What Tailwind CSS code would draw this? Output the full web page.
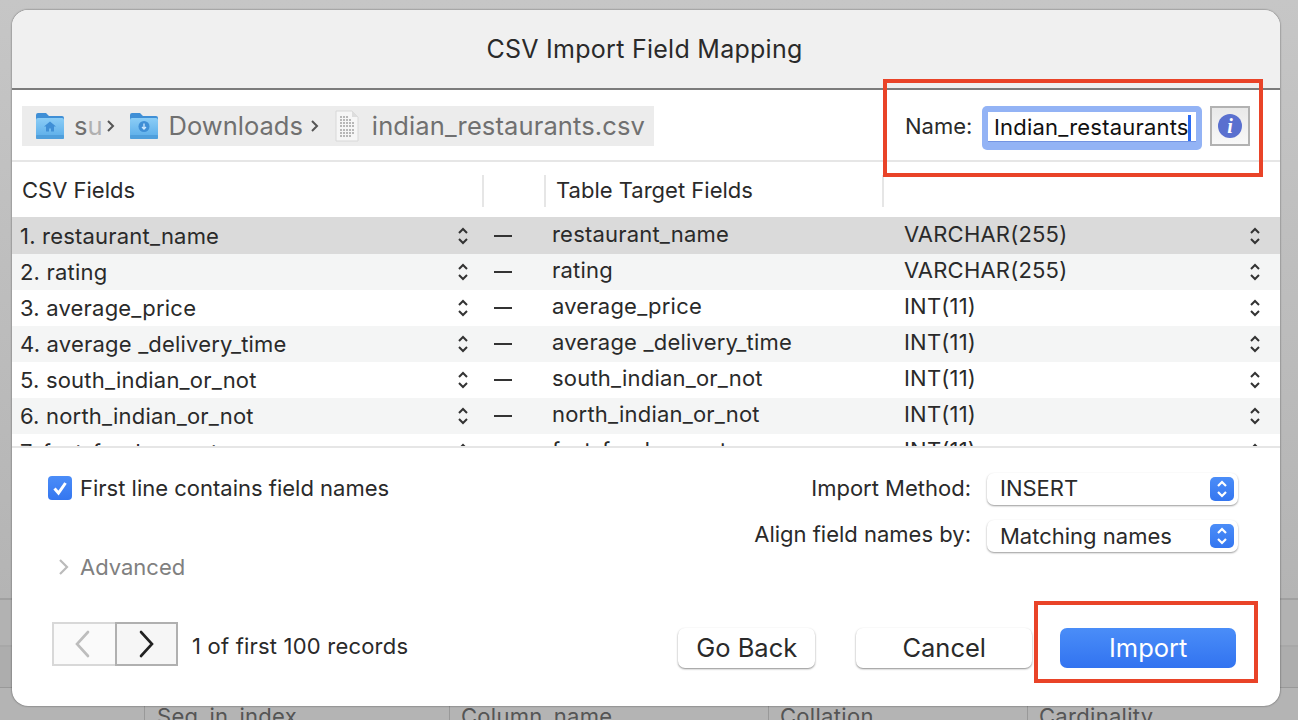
<!DOCTYPE html>
<html lang="en">
<head>
    <meta charset="UTF-8">
    <title>CSV Import Field Mapping</title>
    <script src="https://cdn.jsdelivr.net/npm/@tailwindcss/browser@4"></script>
</head>
<body class="relative w-[1298px] h-[720px] overflow-hidden font-['Inter','Noto_Sans',sans-serif] text-[#2a2a2a] text-[22px]">

<!-- table behind the dialog -->
<div class="h-[598px] bg-linear-to-b from-[#c6c6c6] to-[#b4b4b4]"></div>
<div class="h-[47px] bg-[#b2b2b2] border-t-2 border-[#a0a0a0]"></div>
<div class="h-[42px] bg-[#adadad] border-t-2 border-[#a8a8a8]"></div>
<div class="h-[33px] bg-[#b4b4b4] border-t border-[#999] flex pt-[17px] overflow-hidden text-[22px] text-[#555] leading-[22px] tracking-[0.3px]">
    <div class="w-[145px] border-r border-[#999]"></div>
    <div class="w-[305px] border-r border-[#999] pl-[12px]">Seq_in_index</div>
    <div class="w-[319px] border-r border-[#999] pl-[11px]">Column_name</div>
    <div class="w-[259px] border-r border-[#999] pl-[11px]">Collation</div>
    <div class="pl-[11px]">Cardinality</div>
</div>

<!-- dialog -->
<div class="absolute left-[12px] top-[10px] w-[1268px] h-[696px] rounded-[16px] bg-white overflow-hidden shadow-[0_0_2px_rgba(0,0,0,0.6)]">

    <div class="h-[78px] bg-[#f0f0f0] flex items-center justify-center pt-[2px] pr-[3px] text-[25px] tracking-[0.27px]">CSV Import Field Mapping</div>

    <!-- path + name -->
    <div class="h-[74px] border-t-2 border-b-2 border-t-[#7c7c7c] border-b-[#e6e6e6] flex items-center pt-[2px] pl-[10px]">
        <div class="w-[632px] shrink-0 h-[40px] bg-[#ececec] flex items-center pl-[13px] text-[#707070] text-[25.5px] whitespace-nowrap">
            <svg class="w-[30px] h-[28px]" viewBox="0 0 30 28">
                <defs><linearGradient id="body" x1="0" y1="0" x2="0" y2="1"><stop offset="0" stop-color="#8bcdf6"/><stop offset="1" stop-color="#58abe8"/></linearGradient></defs>
                <path d="M1 3a2 2 0 0 1 2-2h8l3 3h13a2 2 0 0 1 2 2v3H1z" fill="#3f8fd6"/>
                <rect x="1" y="6" width="28" height="21" rx="2" fill="url(#body)"/>
                <rect x="1" y="23" width="28" height="4" rx="1" fill="#4f9fdc"/>
                <path d="M15 9.500l6 5h-2v5h-3v-3h-2v3h-3v-5H9z" fill="#3f8fd6"/>
            </svg>
            <span class="ml-[9px]">s<span class="text-[#b0b0b0]">u</span></span>
            <svg class="ml-[3px] w-[10px] h-[14px]" viewBox="0 0 10 14" fill="none" stroke="#555" stroke-width="2"><path d="M2 2l5 5-5 5"/></svg>
            <svg class="ml-[13px] w-[30px] h-[28px]" viewBox="0 0 30 28">
                <path d="M1 3a2 2 0 0 1 2-2h8l3 3h13a2 2 0 0 1 2 2v3H1z" fill="#3f8fd6"/>
                <rect x="1" y="6" width="28" height="21" rx="2" fill="url(#body)"/>
                <rect x="1" y="23" width="28" height="4" rx="1" fill="#4f9fdc"/>
                <circle cx="15" cy="14.500" r="5.500" fill="#3f8fd6"/>
                <path d="M15 11.500v5M13 15l2 2 2-2" fill="none" stroke="#cfeaff" stroke-width="1.300"/>
            </svg>
            <span class="ml-[10px]">Downloads</span>
            <svg class="ml-[7px] w-[10px] h-[14px]" viewBox="0 0 10 14" fill="none" stroke="#555" stroke-width="2"><path d="M2 2l5 5-5 5"/></svg>
            <svg class="ml-[14px] w-[26px] h-[32px]" viewBox="0 0 26 32">
                <path d="M2 1h16l6 6v24H2z" fill="#f6f6f6" stroke="#d8d8d8"/>
                <path d="M18 1v6h6z" fill="#ddd"/>
                <path d="M6 7h9M6 10h11M6 13h14M6 16h14M6 20h14M6 23h14M6 26h12" stroke="#a2a2a2" stroke-width="1.400" stroke-dasharray="2 1"/>
            </svg>
            <span class="ml-[12px] tracking-[0.12px]">indian_restaurants.csv</span>
        </div>
        <span class="ml-[251px] w-[67px] shrink-0">Name:</span>
        <div class="ml-[10px] mt-[4px] w-[220px] shrink-0 h-[44px] rounded-[5px] bg-[#93b3f5] p-[6px] flex">
            <div class="w-full h-[30px] bg-white border-b border-[#7394e2] flex items-center pt-[2px] pl-[6px] tracking-[0.2px] text-[#111] whitespace-nowrap overflow-hidden">Indian_restaurants<span class="w-[3px] h-[26px] bg-[#2c6cf2] shrink-0 -ml-[1px]"></span></div>
        </div>
        <div class="ml-[8px] w-[40px] shrink-0 h-[40px] border-2 border-[#b2b2b2] bg-linear-to-b from-[#e9e9e9] to-[#f8f8f8] flex items-center justify-center">
            <div class="w-[24px] h-[24px] rounded-full bg-[#5a70cf] text-white flex items-center justify-center font-['Liberation_Serif',serif] italic font-bold text-[20px] leading-none">i</div>
        </div>
    </div>

    <!-- column headers -->
    <div class="h-[55px] flex items-center pt-[2px]">
        <div class="w-[472px] h-[32px] pl-[10px] border-r-2 border-[#e6e6e6] flex items-center">CSV Fields</div>
        <div class="w-[62px] h-[32px] border-r-2 border-[#e6e6e6]"></div>
        <div class="w-[338px] h-[32px] pl-[10px] border-r-2 border-[#e6e6e6] flex items-center">Table Target Fields</div>
    </div>

    <!-- mapping rows -->
    <div class="h-[229px] overflow-hidden tracking-[0.2px] whitespace-nowrap">
        <div class="h-[37px] pt-[1px] bg-[#dadada] flex items-center">
            <span class="w-[444px] pl-[8px]">1. restaurant_name</span>
            <svg class="w-[14px] h-[20px]" viewBox="0 0 14 20" fill="none" stroke="#333" stroke-width="2"><path d="M3 7l4-4 4 4M3 13l4 4 4-4"/></svg>
            <span class="ml-[24px] w-[18px] h-[2px] bg-[#333]"></span>
            <span class="ml-[40px] w-[352px] -mt-[4px]">restaurant_name</span>
            <span class="w-[344px] -mt-[4px]">VARCHAR(255)</span>
            <svg class="w-[14px] h-[20px]" viewBox="0 0 14 20" fill="none" stroke="#333" stroke-width="2"><path d="M3 7l4-4 4 4M3 13l4 4 4-4"/></svg>
        </div>
        <div class="h-[36px] bg-[#f4f5f5] flex items-center">
            <span class="w-[444px] pl-[8px]">2. rating</span>
            <svg class="w-[14px] h-[20px]" viewBox="0 0 14 20" fill="none" stroke="#333" stroke-width="2"><path d="M3 7l4-4 4 4M3 13l4 4 4-4"/></svg>
            <span class="ml-[24px] w-[18px] h-[2px] bg-[#333]"></span>
            <span class="ml-[40px] w-[352px] -mt-[4px]">rating</span>
            <span class="w-[344px] -mt-[4px]">VARCHAR(255)</span>
            <svg class="w-[14px] h-[20px]" viewBox="0 0 14 20" fill="none" stroke="#333" stroke-width="2"><path d="M3 7l4-4 4 4M3 13l4 4 4-4"/></svg>
        </div>
        <div class="h-[36px] bg-white flex items-center">
            <span class="w-[444px] pl-[8px]">3. average_price</span>
            <svg class="w-[14px] h-[20px]" viewBox="0 0 14 20" fill="none" stroke="#333" stroke-width="2"><path d="M3 7l4-4 4 4M3 13l4 4 4-4"/></svg>
            <span class="ml-[24px] w-[18px] h-[2px] bg-[#333]"></span>
            <span class="ml-[40px] w-[352px] -mt-[4px]">average_price</span>
            <span class="w-[344px] -mt-[4px]">INT(11)</span>
            <svg class="w-[14px] h-[20px]" viewBox="0 0 14 20" fill="none" stroke="#333" stroke-width="2"><path d="M3 7l4-4 4 4M3 13l4 4 4-4"/></svg>
        </div>
        <div class="h-[36px] bg-[#f4f5f5] flex items-center">
            <span class="w-[444px] pl-[8px]">4. average _delivery_time</span>
            <svg class="w-[14px] h-[20px]" viewBox="0 0 14 20" fill="none" stroke="#333" stroke-width="2"><path d="M3 7l4-4 4 4M3 13l4 4 4-4"/></svg>
            <span class="ml-[24px] w-[18px] h-[2px] bg-[#333]"></span>
            <span class="ml-[40px] w-[352px] -mt-[4px]">average _delivery_time</span>
            <span class="w-[344px] -mt-[4px]">INT(11)</span>
            <svg class="w-[14px] h-[20px]" viewBox="0 0 14 20" fill="none" stroke="#333" stroke-width="2"><path d="M3 7l4-4 4 4M3 13l4 4 4-4"/></svg>
        </div>
        <div class="h-[36px] bg-white flex items-center">
            <span class="w-[444px] pl-[8px]">5. south_indian_or_not</span>
            <svg class="w-[14px] h-[20px]" viewBox="0 0 14 20" fill="none" stroke="#333" stroke-width="2"><path d="M3 7l4-4 4 4M3 13l4 4 4-4"/></svg>
            <span class="ml-[24px] w-[18px] h-[2px] bg-[#333]"></span>
            <span class="ml-[40px] w-[352px] -mt-[4px]">south_indian_or_not</span>
            <span class="w-[344px] -mt-[4px]">INT(11)</span>
            <svg class="w-[14px] h-[20px]" viewBox="0 0 14 20" fill="none" stroke="#333" stroke-width="2"><path d="M3 7l4-4 4 4M3 13l4 4 4-4"/></svg>
        </div>
        <div class="h-[36px] bg-[#f4f5f5] flex items-center">
            <span class="w-[444px] pl-[8px]">6. north_indian_or_not</span>
            <svg class="w-[14px] h-[20px]" viewBox="0 0 14 20" fill="none" stroke="#333" stroke-width="2"><path d="M3 7l4-4 4 4M3 13l4 4 4-4"/></svg>
            <span class="ml-[24px] w-[18px] h-[2px] bg-[#333]"></span>
            <span class="ml-[40px] w-[352px] -mt-[4px]">north_indian_or_not</span>
            <span class="w-[344px] -mt-[4px]">INT(11)</span>
            <svg class="w-[14px] h-[20px]" viewBox="0 0 14 20" fill="none" stroke="#333" stroke-width="2"><path d="M3 7l4-4 4 4M3 13l4 4 4-4"/></svg>
        </div>
        <div class="h-[36px] bg-white flex items-center">
            <span class="w-[444px] pl-[8px]">7. fast_food_or_not</span>
            <svg class="w-[14px] h-[20px]" viewBox="0 0 14 20" fill="none" stroke="#333" stroke-width="2"><path d="M3 7l4-4 4 4M3 13l4 4 4-4"/></svg>
            <span class="ml-[24px] w-[18px] h-[2px] bg-[#333]"></span>
            <span class="ml-[40px] w-[352px] -mt-[4px]">fast_food_or_not</span>
            <span class="w-[344px] -mt-[4px]">INT(11)</span>
            <svg class="w-[14px] h-[20px]" viewBox="0 0 14 20" fill="none" stroke="#333" stroke-width="2"><path d="M3 7l4-4 4 4M3 13l4 4 4-4"/></svg>
        </div>
    </div>

    <!-- options -->
    <div class="h-[2px] bg-[#e6e6e6]"></div>
    <div class="h-[258px] pl-[36px] pr-[42px] flex flex-col">
        <div class="h-[150px] flex justify-between pt-[24px]">
            <div>
                <div class="flex items-center h-[32px]">
                    <span class="w-[24px] h-[24px] rounded-[4px] bg-linear-to-b from-[#4b8df8] to-[#3476f0] flex items-center justify-center">
                        <svg class="w-[16px] h-[16px]" viewBox="0 0 16 16" fill="none" stroke="white" stroke-width="3"><path d="M2.500 8.500l4 4.500 7-10"/></svg>
                    </span>
                    <span class="ml-[8px]">First line contains field names</span>
                </div>
                <div class="flex items-center h-[32px] mt-[47px] text-[#808080]">
                    <svg class="ml-[10px] w-[12px] h-[18px]" viewBox="0 0 12 18" fill="none" stroke="#bbb" stroke-width="2.200"><path d="M2 2l7 7-7 7"/></svg>
                    <span class="ml-[10px]">Advanced</span>
                </div>
            </div>
            <div class="flex flex-col gap-[15px]">
                <div class="flex items-center justify-end">
                    <span class="mr-[16px]">Import Method:</span>
                    <div class="w-[251px] h-[32px] rounded-[7px] bg-white shadow-[0_1px_2px_rgba(0,0,0,0.4)] flex items-center justify-between pl-[13px] pr-[4px]">
                        <span>INSERT</span>
                        <span class="w-[24px] h-[24px] rounded-[5px] bg-linear-to-b from-[#4b8df8] to-[#3476f0] flex items-center justify-center">
                            <svg class="w-[14px] h-[20px]" viewBox="0 0 14 20" fill="none" stroke="white" stroke-width="2.200"><path d="M3 7l4-4 4 4M3 13l4 4 4-4"/></svg>
                        </span>
                    </div>
                </div>
                <div class="flex items-center justify-end">
                    <span class="mr-[16px] -mt-[4px]">Align field names by:</span>
                    <div class="w-[251px] h-[32px] rounded-[7px] bg-white shadow-[0_1px_2px_rgba(0,0,0,0.4)] flex items-center justify-between pl-[13px] pr-[4px]">
                        <span>Matching names</span>
                        <span class="w-[24px] h-[24px] rounded-[5px] bg-linear-to-b from-[#4b8df8] to-[#3476f0] flex items-center justify-center">
                            <svg class="w-[14px] h-[20px]" viewBox="0 0 14 20" fill="none" stroke="white" stroke-width="2.200"><path d="M3 7l4-4 4 4M3 13l4 4 4-4"/></svg>
                        </span>
                    </div>
                </div>
            </div>
        </div>
        <div class="flex items-center mt-[22px] pl-[4px]">
            <div class="flex w-[126px] h-[44px]">
                <div class="w-[63px] bg-[#fafafa] border-2 border-r-0 border-[#d8d8d8] flex items-center justify-center pr-[4px]">
                    <svg class="w-[17px] h-[28px]" viewBox="0 0 17 28" fill="none" stroke="#bdbdbd" stroke-width="2.600" stroke-linecap="round"><path d="M14 2L3 14l11 12"/></svg>
                </div>
                <div class="w-[63px] bg-[#f6f6f6] border-2 border-[#b0b0b0] flex items-center justify-center">
                    <svg class="w-[17px] h-[28px]" viewBox="0 0 17 28" fill="none" stroke="#222" stroke-width="2.600" stroke-linecap="round"><path d="M3 2l11 12L3 26"/></svg>
                </div>
            </div>
            <span class="ml-[14px] mt-[4px] tracking-[0.2px]">1 of first 100 records</span>
            <button class="ml-[270px] mt-[8px] w-[137px] h-[40px] rounded-[7px] bg-white shadow-[0_1px_2px_rgba(0,0,0,0.45)] text-[25.5px]">Go Back</button>
            <button class="ml-[41px] mt-[8px] w-[176px] h-[40px] rounded-[7px] bg-white shadow-[0_1px_2px_rgba(0,0,0,0.45)] text-[25.5px]">Cancel</button>
            <button class="ml-[28px] mt-[8px] w-[176px] h-[40px] rounded-[7px] bg-linear-to-b from-[#4a8df8] to-[#3273f0] text-white text-[25.5px]">Import</button>
        </div>
    </div>

    <!-- red annotation boxes -->
    <div class="absolute left-[871px] top-[69px] w-[380px] h-[98px] border-[4px] border-[#e94328]"></div>
    <div class="absolute left-[1022px] top-[591px] w-[224px] h-[82px] border-[4px] border-[#e94328]"></div>
</div>
</body>
</html>
